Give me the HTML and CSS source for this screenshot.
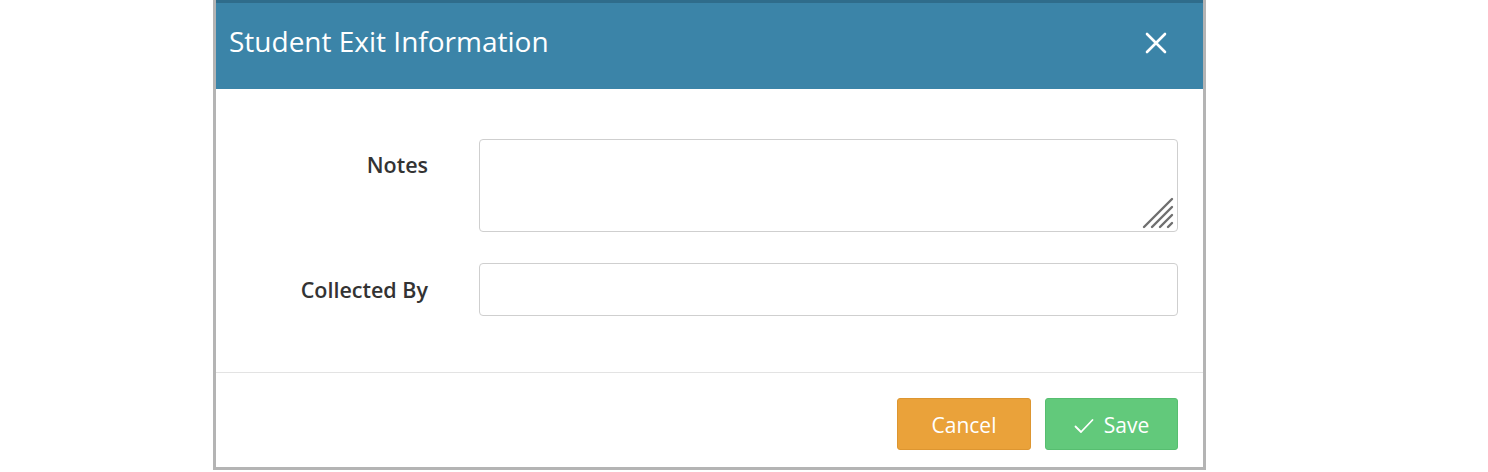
FILE: index.html
```html
<!DOCTYPE html>
<html>
<head>
<meta charset="utf-8">
<link rel="stylesheet" href="styles.css">
</head>
<body>
<div class="modal">
  <div class="modal-header">
    <h1 class="modal-title">Student Exit Information</h1>
    <button class="close-btn" aria-label="Close">
      <svg width="22" height="22" viewBox="0 0 22 22"><path d="M2 2 L20 20 M20 2 L2 20" stroke="#fff" stroke-width="2.6" stroke-linecap="round"/></svg>
    </button>
  </div>
  <div class="modal-body">
    <div class="form-row">
      <label class="form-label label-top">Notes</label>
      <div class="field">
        <textarea class="form-textarea"></textarea>
        <svg class="grip" width="34" height="34" viewBox="0 0 34 34"><g stroke="#6f6f6f" stroke-width="2.4" stroke-linecap="round"><path d="M3 31 L31 3"/><path d="M11 31 L31 11"/><path d="M19 31 L31 19"/><path d="M27 31 L31 27"/></g></svg>
      </div>
    </div>
    <div class="form-row row-center">
      <label class="form-label">Collected By</label>
      <div class="field">
        <input class="form-input" type="text">
      </div>
    </div>
  </div>
  <div class="modal-footer">
    <button class="btn btn-cancel">Cancel</button>
    <button class="btn btn-save"><svg class="check" width="20" height="16" viewBox="0 0 20 16"><path d="M1.5 8.5 L7 14 L18.5 2" fill="none" stroke="#fff" stroke-width="1.8" stroke-linecap="round" stroke-linejoin="round"/></svg>Save</button>
  </div>
</div>
</body>
</html>
```
FILE: styles.css
```css
* { box-sizing: border-box; }
html, body { margin: 0; padding: 0; background: #fff; }
body { font-family: "Open Sans", "Liberation Sans", sans-serif; color: #333; }

.modal {
  margin-left: 213px;
  width: 993px;
  height: 470px;
  border-left: 3px solid #b4b4b4;
  border-right: 3px solid #b4b4b4;
  border-bottom: 3px solid #b4b4b4;
  background: #fff;
  display: flex;
  flex-direction: column;
}

.modal-header {
  height: 89px;
  background: #3b84a8;
  border-top: 3px solid #2f6c8b;
  display: flex;
  align-items: center;
  justify-content: space-between;
  padding: 0 36px 10px 13px;
}
.modal-title {
  margin: 0;
  font-size: 28px;
  line-height: 36px;
  font-weight: 400;
  color: #fff;
}
.close-btn {
  background: none;
  border: 0;
  padding: 0;
  width: 22px;
  height: 22px;
  display: flex;
  margin-top: 4px;
}

.modal-body {
  padding: 50px 25px 56px 0;
  display: flex;
  flex-direction: column;
  gap: 31px;
  border-bottom: 1px solid #e3e3e3;
}
.form-row {
  display: flex;
  align-items: flex-start;
}
.row-center { align-items: center; }
.form-label {
  width: 212px;
  text-align: right;
  font-size: 21.5px;
  line-height: 28px;
  font-weight: 600;
  color: #333;
  margin-right: 51px;
}
.label-top { padding-top: 12px; }
.field {
  position: relative;
  width: 699px;
}
.form-textarea, .form-input {
  display: block;
  width: 100%;
  border: 1px solid #cfcfcf;
  border-radius: 4px;
  background: #fff;
  font: inherit;
  outline: none;
}
.form-textarea { height: 93px; resize: none; }
.form-input { height: 53px; }
.grip {
  position: absolute;
  right: 3px;
  bottom: 2px;
}

.modal-footer {
  flex: 1;
  display: flex;
  justify-content: flex-end;
  align-items: flex-start;
  gap: 14px;
  padding: 25px 25px 0 0;
}
.btn {
  height: 52px;
  border-radius: 3px;
  color: #fff;
  font-family: "Open Sans", "Liberation Sans", sans-serif;
  font-size: 21px;
  font-weight: 400;
  display: flex;
  align-items: center;
  justify-content: center;
  padding: 1px 0 0;
}
.btn-cancel {
  width: 134px;
  background: #eaa23a;
  border: 1px solid #dd9631;
}
.btn-save {
  width: 133px;
  background: #62c97b;
  border: 1px solid #57be70;
  gap: 10px;
}
.check { margin-top: 2px; }
```
